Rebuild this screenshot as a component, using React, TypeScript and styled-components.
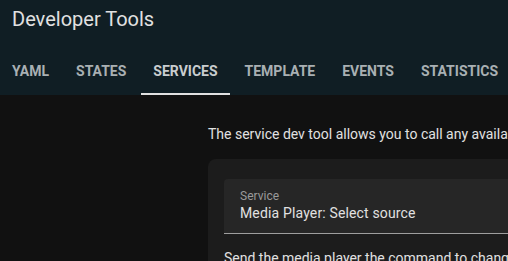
import styled, { createGlobalStyle } from "styled-components";

const GlobalStyle = createGlobalStyle`
  html, body {
    margin: 0;
    padding: 0;
    background: #111111;
    overflow: hidden;
    font-family: Roboto, "Liberation Sans", sans-serif;
    -webkit-font-smoothing: antialiased;
  }
`;

const tabs = ["YAML", "States", "Services", "Template", "Events", "Statistics"];

export default function App() {
  return (
    <>
      <GlobalStyle />
      <Page>
        <Header>
          <Toolbar>
            <Title>Developer Tools</Title>
          </Toolbar>
          <TabBar>
            {tabs.map((tab) => (
              <Tab key={tab} $active={tab === "Services"}>
                {tab}
              </Tab>
            ))}
          </TabBar>
        </Header>
        <Content>
          <Description>
            The service dev tool allows you to call any available service in Home Assistant.
          </Description>
          <Card>
            <Field>
              <FieldLabel>Service</FieldLabel>
              <FieldValue>Media Player: Select source</FieldValue>
            </Field>
            <Help>Send the media player the command to change input source.</Help>
          </Card>
        </Content>
      </Page>
    </>
  );
}

const Page = styled.div`
  width: 508px;
  height: 261px;
  overflow: hidden;
  background: #111111;
`;

const Header = styled.header`
  background: #101e24;
  display: flex;
  flex-direction: column;
`;

const Toolbar = styled.div`
  height: 47px;
  display: flex;
  align-items: center;
  padding: 0 12px;
`;

const Title = styled.div`
  font-size: 20px;
  color: #e1e1e1;
  font-weight: 400;
  margin-top: -9px;
`;

const TabBar = styled.nav`
  height: 48px;
  display: flex;
  gap: 3px;
  white-space: nowrap;
`;

const Tab = styled.div<{ $active?: boolean }>`
  height: 100%;
  box-sizing: border-box;
  padding: 2px 12px 0;
  display: flex;
  align-items: center;
  text-transform: uppercase;
  font-size: 14px;
  font-weight: 700;
  color: ${(p) => (p.$active ? "#c9cdcf" : "#a9b0b3")};
  border-bottom: 2px solid ${(p) => (p.$active ? "#e1e1e1" : "transparent")};
`;

const Content = styled.main`
  padding: 29px 0 0 208px;
  width: 700px;
`;

const Description = styled.div`
  font-size: 14px;
  color: #e1e1e1;
  white-space: nowrap;
  line-height: 20px;
`;

const Card = styled.div`
  margin-top: 15px;
  background: #1c1c1c;
  border-radius: 8px;
  padding: 20px 16px;
`;

const Field = styled.div`
  background: #262626;
  border-radius: 4px 4px 0 0;
  border-bottom: 1px solid #9e9e9e;
  height: 54px;
  padding: 0 16px;
  display: flex;
  flex-direction: column;
  justify-content: center;
`;

const FieldLabel = styled.div`
  font-size: 12px;
  color: #9a9a9a;
  line-height: 14px;
`;

const FieldValue = styled.div`
  font-size: 14px;
  letter-spacing: 0.15px;
  color: #e1e1e1;
  line-height: 20px;
`;

const Help = styled.div`
  margin-top: 16px;
  font-size: 14px;
  color: #e1e1e1;
  white-space: nowrap;
`;
